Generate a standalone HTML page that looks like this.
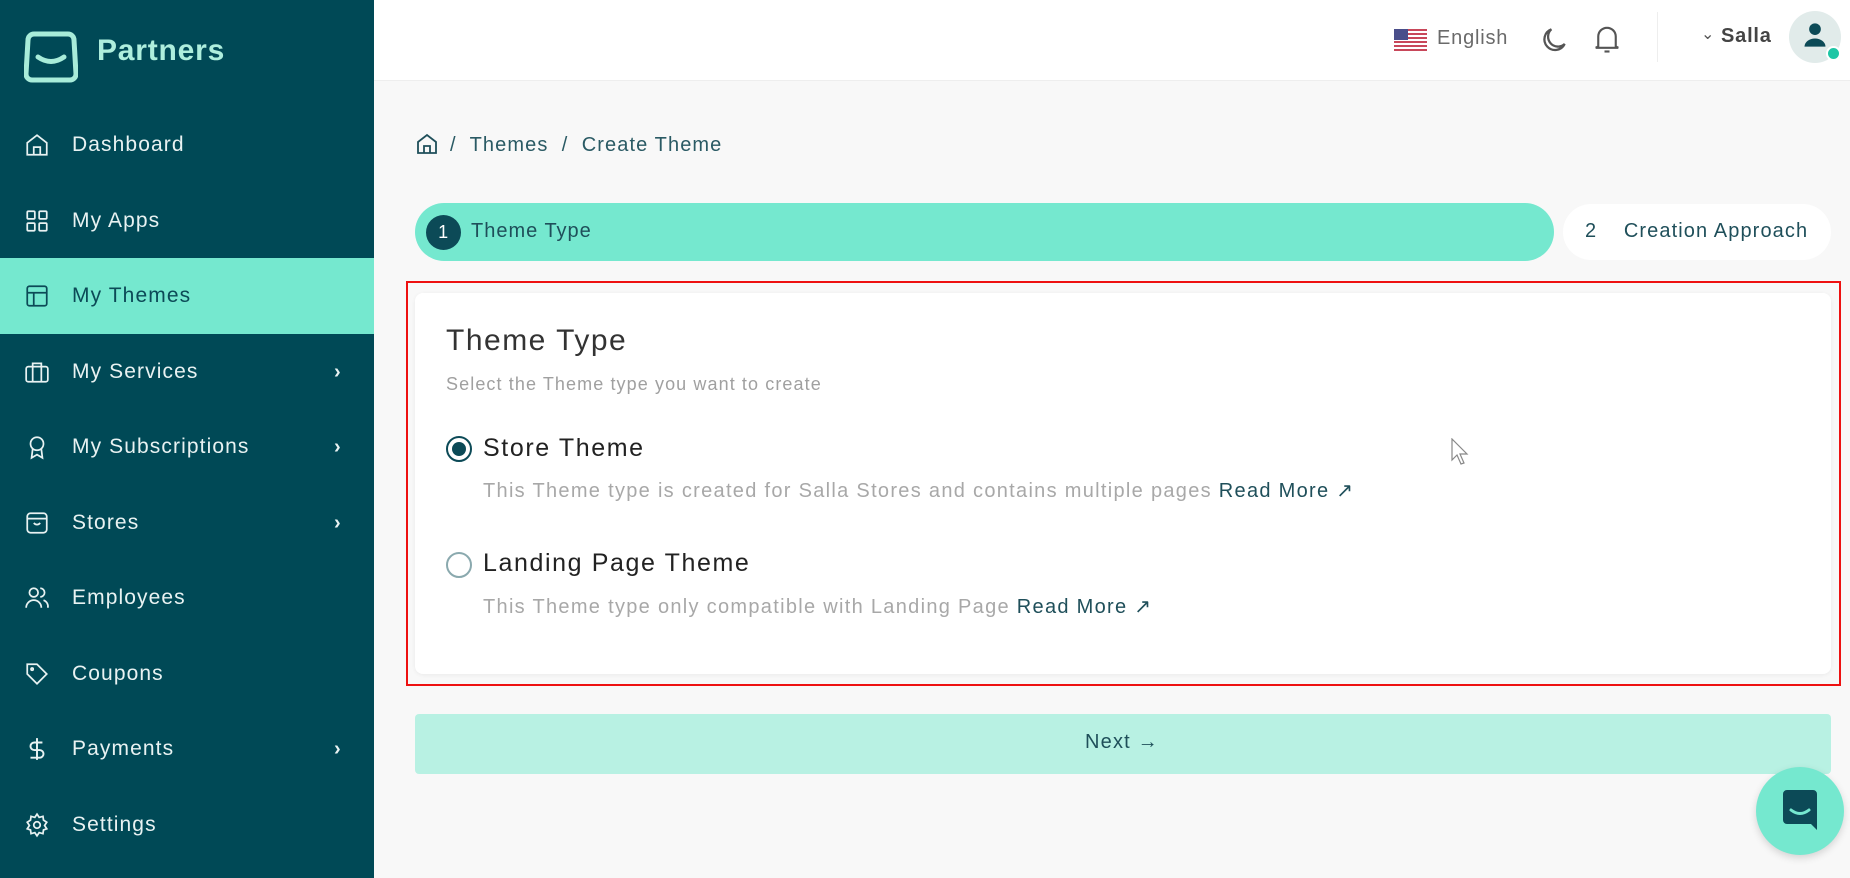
<!DOCTYPE html>
<html><head><meta charset="utf-8"><style>
*{box-sizing:border-box;margin:0;padding:0}
body{width:1850px;height:878px;overflow:hidden;background:#f8f8f8;font-family:"Liberation Sans",sans-serif;position:relative;letter-spacing:0.8px}
.sb{position:absolute;left:0;top:0;width:374px;height:878px;background:#004956}
.logo{position:absolute;left:24px;top:30px}
.brand{position:absolute;left:97px;top:34px;font-size:30px;color:#aeeedd;font-weight:bold;letter-spacing:0.8px}
.it{position:absolute;left:0;width:374px;height:76px;display:flex;align-items:center;color:#e8f2f2;font-size:21px;letter-spacing:1.1px}
.it svg{position:absolute;left:24px}
.it span{position:absolute;left:72px}
.it .ch{position:absolute;left:334px;font-size:20px}
.act{background:#75e8cf;color:#0c4a57}
.hdr{position:absolute;left:374px;top:0;right:0;height:81px;background:#fff;border-bottom:1px solid #eee}
.card{position:absolute;left:415px;top:293px;width:1416px;height:381px;background:#fff;border-radius:8px;box-shadow:0 1px 4px rgba(0,0,0,.06)}
.red{position:absolute;left:406px;top:281px;width:1435px;height:405px;border:2px solid #ee1111}
.t{position:absolute;color:#333;white-space:nowrap}
</style></head><body>
<div class="sb">
<svg class="logo" width="54" height="54" viewBox="0 0 54 54"><path d="M10 4h34a6 6 0 0 1 6 6l2 34a6 6 0 0 1-6 6H8a6 6 0 0 1-6-6l2-34a6 6 0 0 1 6-6z" fill="none" stroke="#a8ecd9" stroke-width="5"/><path d="M14 27q13 9 26 0" fill="none" stroke="#a8ecd9" stroke-width="5" stroke-linecap="round"/></svg>
<div class="brand">Partners</div>
<div class="it" style="top:107px"><svg width="26" height="26" viewBox="0 0 24 24" fill="none" stroke="#e8f2f2" stroke-width="1.6"><path d="M3 10l9-7 9 7v11H3z"/><path d="M9 21v-7h6v7"/></svg><span>Dashboard</span></div>
<div class="it" style="top:183px"><svg width="26" height="26" viewBox="0 0 24 24" fill="none" stroke="#e8f2f2" stroke-width="1.6"><rect x="3" y="3" width="7" height="7" rx="1"/><rect x="14" y="3" width="7" height="7" rx="1"/><rect x="3" y="14" width="7" height="7" rx="1"/><rect x="14" y="14" width="7" height="7" rx="1"/></svg><span>My Apps</span></div>
<div class="it act" style="top:258px"><svg width="26" height="26" viewBox="0 0 24 24" fill="none" stroke="#0c4a57" stroke-width="1.6"><rect x="3" y="3" width="18" height="18" rx="2"/><path d="M3 9h18M9 9v12"/></svg><span>My Themes</span></div>
<div class="it" style="top:334px"><svg width="26" height="26" viewBox="0 0 24 24" fill="none" stroke="#e8f2f2" stroke-width="1.6"><rect x="2" y="7" width="20" height="14" rx="2"/><path d="M8 7V4h8v3M8 7v14M16 7v14"/></svg><span>My Services</span><b class="ch">›</b></div>
<div class="it" style="top:409px"><svg width="26" height="26" viewBox="0 0 24 24" fill="none" stroke="#e8f2f2" stroke-width="1.6"><circle cx="12" cy="9" r="6"/><path d="M8 14l-1 8 5-3 5 3-1-8"/></svg><span>My Subscriptions</span><b class="ch">›</b></div>
<div class="it" style="top:485px"><svg width="26" height="26" viewBox="0 0 24 24" fill="none" stroke="#e8f2f2" stroke-width="1.6"><rect x="3" y="3" width="18" height="18" rx="3"/><path d="M3 8h18M9 12q3 3 6 0"/></svg><span>Stores</span><b class="ch">›</b></div>
<div class="it" style="top:560px"><svg width="26" height="26" viewBox="0 0 24 24" fill="none" stroke="#e8f2f2" stroke-width="1.6"><circle cx="9" cy="7" r="4"/><path d="M2 21a7 7 0 0 1 14 0M15 3a4 4 0 0 1 0 8M18 14a6 6 0 0 1 4 7"/></svg><span>Employees</span></div>
<div class="it" style="top:636px"><svg width="26" height="26" viewBox="0 0 24 24" fill="none" stroke="#e8f2f2" stroke-width="1.6"><path d="M3 3h9l9 9-9 9-9-9z"/><circle cx="7.5" cy="7.5" r="1"/></svg><span>Coupons</span></div>
<div class="it" style="top:711px"><svg width="26" height="26" viewBox="0 0 24 24" fill="none" stroke="#e8f2f2" stroke-width="1.8"><path d="M12 2v20M17 6H9.5a3.5 3.5 0 0 0 0 7h5a3.5 3.5 0 0 1 0 7H6"/></svg><span>Payments</span><b class="ch">›</b></div>
<div class="it" style="top:787px"><svg width="26" height="26" viewBox="0 0 24 24" fill="none" stroke="#e8f2f2" stroke-width="1.6"><circle cx="12" cy="12" r="3"/><path d="M12 2l2 3 3.5-1 .5 3.5 3 2-2 3 2 3-3 1-.5 3.5-3.5-1-2 3-2-3-3.5 1-.5-3.5-3-1 2-3-2-3 3-2 .5-3.5 3.5 1z"/></svg><span>Settings</span></div>
</div>
<div class="hdr">
<svg style="position:absolute;left:1020px;top:29px" width="33" height="22" viewBox="0 0 33 22"><rect width="33" height="22" fill="#fff"/><g fill="#c8475a"><rect y="0" width="33" height="2"/><rect y="4" width="33" height="2"/><rect y="8" width="33" height="2"/><rect y="12" width="33" height="2"/><rect y="16" width="33" height="2"/><rect y="20" width="33" height="2"/></g><rect width="14" height="11" fill="#4a4e8a"/></svg>
<div class="t" style="left:1063px;top:27px;font-size:20px;color:#6a6a6a">English</div>
<svg style="position:absolute;left:1164px;top:23px" width="32" height="34" viewBox="0 0 24 24" fill="none" stroke="#555" stroke-width="1.7"><path d="M20 15A8 8 0 1 1 10 4a7 7 0 0 0 10 11z"/></svg>
<svg style="position:absolute;left:1218px;top:22px" width="30" height="34" viewBox="0 0 24 26" fill="none" stroke="#555" stroke-width="1.7"><path d="M5 19V11a7 7 0 0 1 14 0v8l2 1H3z"/><path d="M10 23h4"/></svg>
<div style="position:absolute;left:1283px;top:12px;width:1px;height:50px;background:#eee"></div>
<div class="t" style="left:1327px;top:24px;font-size:16px;color:#555">⌄</div>
<div class="t" style="left:1347px;top:25px;font-size:20px;font-weight:bold;color:#444">Salla</div>
<div style="position:absolute;left:1415px;top:11px;width:52px;height:52px;border-radius:50%;background:#e1ebea"></div>
<svg style="position:absolute;left:1427px;top:21px" width="28" height="28" viewBox="0 0 24 24" fill="#0c4a57"><circle cx="12" cy="7" r="5"/><path d="M3 22a9 7 0 0 1 18 0z"/></svg>
<div style="position:absolute;left:1452px;top:46px;width:15px;height:15px;border-radius:50%;background:#1ec6a5;border:2px solid #fff"></div>
</div>
<svg style="position:absolute;left:415px;top:132px" width="24" height="24" viewBox="0 0 24 24" fill="none" stroke="#1f4f5a" stroke-width="1.8"><path d="M3 10l9-7 9 7v11H3z"/><path d="M9 21v-7h6v7"/></svg>
<div class="t" style="left:450px;top:134px;font-size:20px;color:#2a5a64;letter-spacing:1.1px">/&nbsp; Themes &nbsp;/&nbsp; Create Theme</div>
<div style="position:absolute;left:415px;top:203px;width:1139px;height:58px;border-radius:29px;background:#75e8cf"></div>
<div style="position:absolute;left:426px;top:215px;width:35px;height:35px;border-radius:50%;background:#0c4a57;color:#fff;font-size:18px;text-align:center;line-height:35px">1</div>
<div class="t" style="left:471px;top:220px;font-size:20px;color:#1f4f5a;letter-spacing:1px">Theme Type</div>
<div style="position:absolute;left:1563px;top:204px;width:268px;height:56px;border-radius:28px;background:#fff"></div>
<div class="t" style="left:1585px;top:220px;font-size:20px;color:#1f4f5a;letter-spacing:1.1px">2&nbsp;&nbsp;&nbsp; Creation Approach</div>
<div class="card"></div>
<div class="red"></div>
<div class="t" style="left:446px;top:324px;font-size:30px;color:#333;letter-spacing:1.5px">Theme Type</div>
<div class="t" style="left:446px;top:374px;font-size:18px;color:#a0a0a0;letter-spacing:1.1px">Select the Theme type you want to create</div>
<div style="position:absolute;left:446px;top:436px;width:26px;height:26px;border-radius:50%;border:2px solid #0c4a57"></div>
<div style="position:absolute;left:452px;top:442px;width:14px;height:14px;border-radius:50%;background:#0c4a57"></div>
<div class="t" style="left:483px;top:434px;font-size:25px;color:#222;letter-spacing:1.6px">Store Theme</div>
<div class="t" style="left:483px;top:478px;font-size:20px;color:#a8a8a8;letter-spacing:1.3px">This Theme type is created for Salla Stores and contains multiple pages <span style="color:#1f4f5a">Read More ↗</span></div>
<div style="position:absolute;left:446px;top:552px;width:26px;height:26px;border-radius:50%;border:2px solid #8aa9ae"></div>
<div class="t" style="left:483px;top:549px;font-size:25px;color:#222;letter-spacing:1.6px">Landing Page Theme</div>
<div class="t" style="left:483px;top:594px;font-size:20px;color:#a8a8a8;letter-spacing:1.3px">This Theme type only compatible with Landing Page <span style="color:#1f4f5a">Read More ↗</span></div>
<div style="position:absolute;left:415px;top:714px;width:1416px;height:60px;border-radius:4px;background:#b8f1e3"></div>
<div class="t" style="left:1085px;top:731px;font-size:20px;color:#1f4f5a;letter-spacing:1.2px">Next →</div>
<div style="position:absolute;left:1756px;top:767px;width:88px;height:88px;border-radius:50%;background:#75e8cf;box-shadow:0 3px 8px rgba(0,0,0,.15)"></div>
<svg style="position:absolute;left:1783px;top:790px" width="34" height="40" viewBox="0 0 34 40"><path d="M4 0h26a4 4 0 0 1 4 4v36l-6-6H4a4 4 0 0 1-4-4V4a4 4 0 0 1 4-4z" fill="#0c4a57"/><path d="M8 20q9 7 18 0" fill="none" stroke="#75e8cf" stroke-width="3" stroke-linecap="round"/></svg>
<svg style="position:absolute;left:1451px;top:438px" width="18" height="28" viewBox="0 0 18 28"><path d="M1 1v21l5-5 4 9 3-1-4-9h7z" fill="#fff" stroke="#888" stroke-width="1.2"/></svg>
</body></html>
